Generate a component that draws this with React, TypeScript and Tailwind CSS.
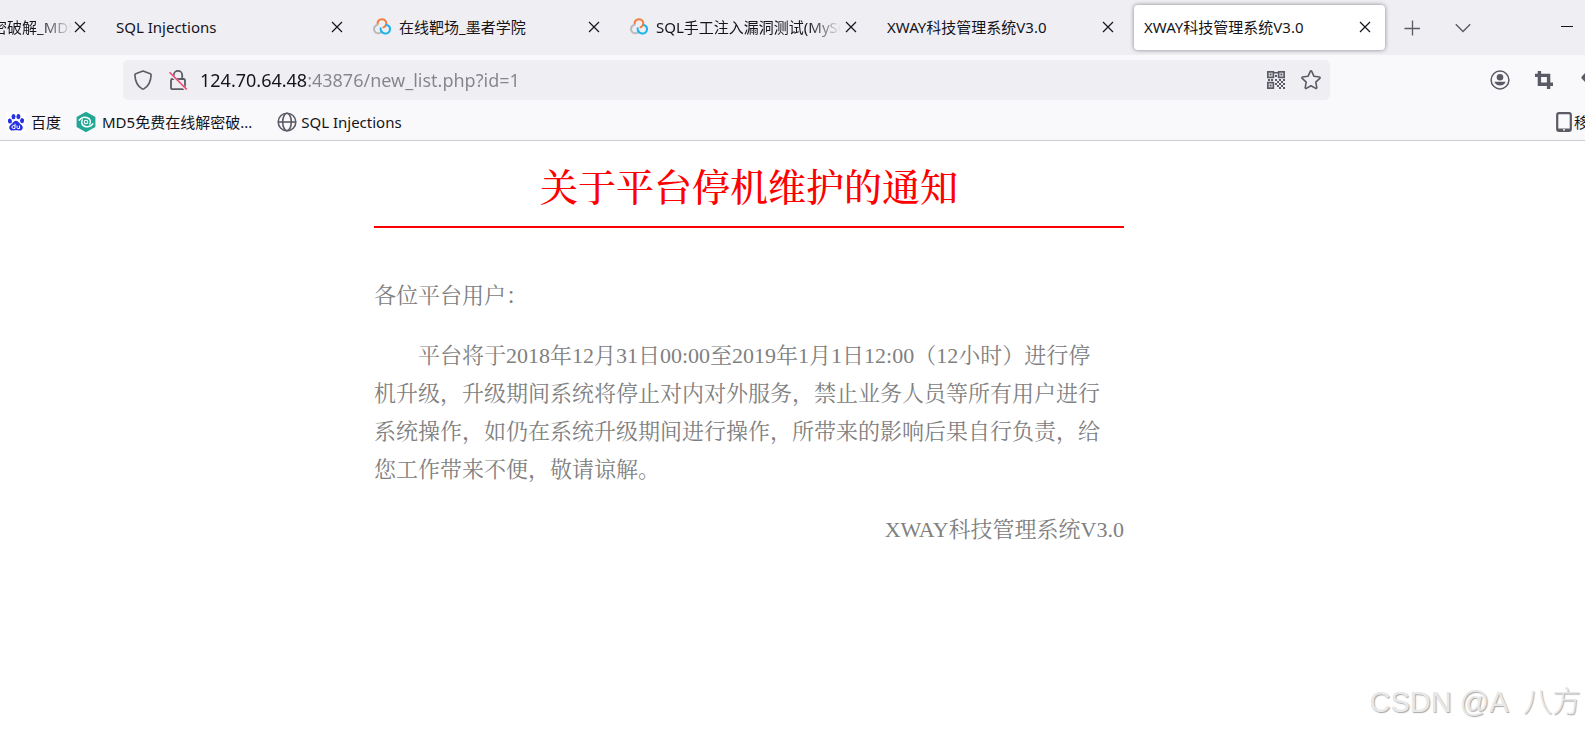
import React from "react";

function CloseIcon() {
  return (
    <svg width="12" height="12" viewBox="0 0 12 12" fill="none" stroke="#15141a" strokeWidth="1.2" aria-hidden="true">
      <path d="M1 1l10 10M11 1L1 11" />
    </svg>
  );
}

function CloverIcon() {
  return (
    <svg width="18" height="18" viewBox="0 0 18 18" fill="none" strokeWidth="2" strokeLinecap="round" className="shrink-0" aria-hidden="true">
      <path d="M4.6 6.2C4.2 3 6.400 1.300 9 1.300c3 0 4.900 2.400 4.200 4.900-.4 1.500-1.400 2.500-2.700 3.100" stroke="#f47b3a" />
      <path d="M4.300 6.900C1.800 7.700.8 9.800 1.100 11.800c.4 2.600 3 4.200 5.500 3.300.9-.3 1.500-.9 2-1.500" stroke="#b9babc" />
      <path d="M13.700 6.900c2.400.7 3.500 2.600 3.300 4.700-.3 2.700-2.700 4.300-5.200 3.800-2.600-.5-4.200-2.800-4.200-5.200" stroke="#1cb4ea" />
    </svg>
  );
}

type TabProps = { title: string; icon?: boolean; active?: boolean; fade?: boolean };

function Tab({ title, icon, active, fade }: TabProps) {
  return (
    <div className="flex w-[257px] shrink-0 px-[3px] py-[5px]">
      <div
        className={
          "flex h-[45px] min-w-0 flex-1 items-center rounded-[4px] pr-[14px] pb-[2px] pl-[10px] " +
          (active ? "bg-white shadow-[0_0_4px_rgba(0,0,0,0.45)]" : "")
        }
      >
        {icon && (
          <span className="mr-2 flex">
            <CloverIcon />
          </span>
        )}
        <button
          type="button"
          className={
            "min-w-0 flex-1 overflow-hidden text-left whitespace-nowrap " +
            (fade ? "[mask-image:linear-gradient(to_left,transparent,black_32px)]" : "")
          }
        >
          {title}
        </button>
        <button type="button" aria-label="关闭标签页" className="ml-1 flex shrink-0">
          <CloseIcon />
        </button>
      </div>
    </div>
  );
}

function TabBar() {
  return (
    <div className="flex h-[55px] overflow-hidden bg-[#efeef3]">
      <div className="flex w-[103px] shrink-0 items-center pr-[17px] pb-[2px]">
        <button
          type="button"
          className="flex min-w-0 flex-1 overflow-hidden whitespace-nowrap [mask-image:linear-gradient(to_left,transparent,black_32px)]"
        >
          <span className="-ml-2">密破解_MD5</span>
        </button>
        <button type="button" aria-label="关闭标签页" className="ml-[2px] flex">
          <CloseIcon />
        </button>
      </div>
      <Tab title="SQL Injections" />
      <Tab title="在线靶场_墨者学院" icon />
      <Tab title="SQL手工注入漏洞测试(MySQL" icon fade />
      <Tab title="XWAY科技管理系统V3.0" />
      <Tab title="XWAY科技管理系统V3.0" active />
      <button type="button" aria-label="新建标签页" className="ml-4 flex shrink-0 items-center">
        <svg width="16" height="16" viewBox="0 0 16 16" stroke="#5b5b66" strokeWidth="1.3" aria-hidden="true">
          <path d="M8.500.5v15M.5 8.500h15.500" />
        </svg>
      </button>
      <button type="button" aria-label="列出所有标签页" className="ml-[35px] flex shrink-0 items-center">
        <svg width="16" height="10" viewBox="0 0 16 10" fill="none" stroke="#5b5b66" strokeWidth="1.400" aria-hidden="true">
          <path d="M.8 1.200L8 8.400l7.200-7.200" />
        </svg>
      </button>
      <button type="button" aria-label="最小化" className="mr-3 ml-auto flex shrink-0 items-center">
        <svg width="12" height="4" viewBox="0 0 12 4" aria-hidden="true">
          <path d="M0 0h12v1H0z" fill="#15141a" />
        </svg>
      </button>
    </div>
  );
}

function QrIcon() {
  const checks = [
    [10, 10], [14, 10], [12, 12], [16, 12], [10, 14], [14, 14], [12, 16], [16, 16],
    [8, 8], [12, 8], [16, 8], [8, 12], [8, 4], [4, 8], [1, 8],
  ];
  return (
    <svg width="18" height="18" viewBox="0 0 18 18" fill="#5b5b66" aria-hidden="true">
      <g fill="none" stroke="#5b5b66" strokeWidth="1.700">
        <path d="M.85.85h5.500v5.500H.85zM11.650.85h5.500v5.500h-5.500zM.85 11.650h5.500v5.500H.85z" />
      </g>
      <path d="M2.600 2.600h2v2h-2zM13.400 2.600h2v2h-2zM2.600 13.400h2v2h-2zM7 1h4v1.500H7z" />
      {checks.map(([x, y]) => (
        <rect key={`${x}-${y}`} x={x} y={y} width="2" height="2" />
      ))}
    </svg>
  );
}

function Toolbar() {
  return (
    <div className="flex h-[50px] items-center overflow-hidden bg-[#f9f9fb] pl-[123px]">
      <form className="flex h-10 min-w-0 flex-1 items-center rounded-[5px] bg-[#efeef3] pr-[9px] pl-[11px]">
        <svg width="18" height="20" viewBox="0 0 18 20" fill="none" stroke="#5b5b66" strokeWidth="1.600" strokeLinejoin="round" className="shrink-0" aria-hidden="true">
          <path d="M9 1L1.700 3.700C1 4 .8 4.400.9 5.100c.3 6.300 2.300 10.600 6.900 13.500q1.200.8 2.400 0c4.600-2.900 6.600-7.200 6.900-13.500.1-.7-.1-1.100-.8-1.400z" />
        </svg>
        <svg width="20" height="22" viewBox="0 0 20 22" fill="none" className="ml-4 shrink-0" aria-hidden="true">
          <rect x="3" y="10" width="14" height="10.200" rx="1.500" stroke="#5b5b66" strokeWidth="1.800" />
          <path d="M5.800 10V6a4.200 4.200 0 0 1 8.400 0v4" stroke="#5b5b66" strokeWidth="1.800" />
          <path d="M.8 3.200l17.600 17.600" stroke="#efeef3" strokeWidth="3" />
          <path d="M1.500 3.200L18.800 20.500" stroke="#f0406c" strokeWidth="1.500" />
        </svg>
        <input
          type="text"
          aria-label="地址栏"
          defaultValue="124.70.64.48:43876/new_list.php?id=1"
          className="ml-3 min-w-0 flex-1 bg-[linear-gradient(to_right,#15141a_107px,#85848b_107px)] bg-clip-text text-[18px] leading-[30px] text-transparent outline-none"
        />
        <button type="button" aria-label="二维码" className="flex shrink-0">
          <QrIcon />
        </button>
        <button type="button" aria-label="收藏" className="ml-4 flex shrink-0">
          <svg width="20" height="20" viewBox="0 0 20 20" fill="none" stroke="#5b5b66" strokeWidth="1.600" strokeLinejoin="round" aria-hidden="true">
            <path d="M9.300 1.300q.7-1 1.400 0l2.300 5 5.400.7q1.200.4.400 1.300l-4 3.800 1 5.500q0 1.200-1.100.8L10 15.700l-4.700 2.700q-1.100.4-1.100-.8l1-5.500-4-3.800q-.8-.9.4-1.300l5.400-.7z" />
          </svg>
        </button>
      </form>
      <div className="flex w-[255px] shrink-0 items-center justify-end">
        <button type="button" aria-label="账户" className="flex shrink-0">
          <svg width="20" height="20" viewBox="0 0 20 20" aria-hidden="true">
            <circle cx="10" cy="10" r="8.900" fill="none" stroke="#5b5b66" strokeWidth="1.500" />
            <circle cx="10" cy="7.300" r="3.300" fill="#5b5b66" />
            <path d="M4.400 11.800h11.200c-.6 2.400-2.800 3.700-5.600 3.700s-5-1.300-5.600-3.700z" fill="#5b5b66" />
          </svg>
        </button>
        <button type="button" aria-label="截图" className="ml-[25px] flex shrink-0">
          <svg width="18" height="18" viewBox="0 0 18 18" fill="none" stroke="#5b5b66" strokeWidth="3.400" aria-hidden="true">
            <path d="M4.400 0v13.200H18M0 4.400h13.600V18" />
          </svg>
        </button>
        <button type="button" aria-label="扩展" className="ml-7 flex shrink-0">
          <svg width="4" height="20" viewBox="0 0 4 20" aria-hidden="true">
            <path d="M4 3L.6 6.800q-.6.700 0 1.400L4 12z" fill="#5b5b66" />
          </svg>
        </button>
      </div>
    </div>
  );
}

function Bookmarks() {
  return (
    <nav className="flex h-9 items-center overflow-hidden border-b border-[#cccccc] bg-[#f9f9fb] pb-[2px] pl-[6px] whitespace-nowrap">
      <a href="#baidu" className="flex items-center gap-[5px]">
        <svg width="20" height="20" viewBox="0 0 20 20" aria-hidden="true">
          <rect width="20" height="20" rx="2" fill="#fff" />
          <g fill="#2932e1">
            <ellipse cx="3.900" cy="9" rx="2" ry="2.600" transform="rotate(-12 3.900 9)" />
            <ellipse cx="7.500" cy="4.600" rx="2" ry="2.700" />
            <ellipse cx="12.400" cy="4.600" rx="2" ry="2.700" transform="rotate(8 12.400 4.600)" />
            <ellipse cx="16.100" cy="8.700" rx="2" ry="2.600" transform="rotate(10 16.100 8.700)" />
            <path d="M10 8.800c1.900 0 2.700 1.500 3.800 2.700 1.300 1.300 3.200 2.200 3 4.300-.2 2.200-1.900 2.900-3.600 2.800-1.300-.1-2-.3-3.200-.3s-1.900.2-3.200.3c-1.700.1-3.400-.6-3.600-2.800-.2-2.100 1.700-3 3-4.300C7.300 10.300 8.100 8.800 10 8.800z" />
          </g>
          <path d="M9 11.800v4.700H7.400a1.400 1.400 0 0 1 0-2.900H9M11 13.500v2q0 1 1 1h1.500v-3" stroke="#fff" strokeWidth="1" fill="none" />
        </svg>
        百度
      </a>
      <a href="#md5" className="ml-[15px] flex items-center gap-[6px]">
        <svg width="20" height="20" viewBox="0 0 20 20" aria-hidden="true">
          <path d="M10 .8l8.600 4.600v9.200L10 19.200 1.400 14.600V5.400z" fill="#22a795" stroke="#22a795" strokeWidth="1.600" strokeLinejoin="round" />
          <g fill="none" stroke="#fff" strokeWidth="1.500" strokeLinecap="round">
            <path d="M3.200 8.200C5 5.400 9 4.400 12 6c2.400 1.200 2.800 4 1.800 6" />
            <path d="M16.800 11.800C15 14.600 11 15.600 8 14c-2.400-1.200-2.800-4-1.800-6" />
          </g>
          <circle cx="10" cy="10" r="1.700" fill="none" stroke="#fff" strokeWidth="1.100" />
        </svg>
        MD5免费在线解密破...
      </a>
      <a href="#sql" className="ml-[25px] flex items-center gap-1">
        <svg width="20" height="20" viewBox="0 0 20 20" fill="none" stroke="#5b5b66" strokeWidth="1.600" aria-hidden="true">
          <circle cx="10" cy="10" r="8.800" />
          <ellipse cx="10" cy="10" rx="4.300" ry="8.800" />
          <path d="M1.200 10h17.600" />
        </svg>
        SQL Injections
      </a>
      <a href="#mobile" className="ml-auto flex w-[29px] shrink-0 items-center gap-[2px] overflow-hidden">
        <svg width="16" height="20" viewBox="0 0 16 20" className="shrink-0" aria-hidden="true">
          <rect x="1.200" y="1.200" width="13.600" height="17.600" rx="1.800" fill="none" stroke="#5b5b66" strokeWidth="2.200" />
          <path d="M1 16.500h14v2.500H1z" fill="#5b5b66" />
          <path d="M7 17.200h2v1.200H7z" fill="#fff" />
        </svg>
        移
      </a>
    </nav>
  );
}

export default function App() {
  return (
    <div className="relative flex min-h-screen flex-col overflow-hidden bg-white font-['Noto_Sans','Noto_Sans_CJK_SC',sans-serif] text-[15px] leading-[22px] text-[#15141a]">
      <header>
        <TabBar />
        <Toolbar />
        <Bookmarks />
      </header>
      <main className="flex-1 pr-[87px] font-['Liberation_Serif','Noto_Serif_CJK_SC','Noto_Sans_CJK_SC',serif]">
        <article className="mx-auto w-full max-w-[750px] text-[22px] leading-[38px] font-normal text-[#808080]">
          <h1 className="border-b-2 border-[#ff0000] pt-5 pb-[11px] text-center text-[38px] leading-[54px] font-medium text-[#ff0000]">
            关于平台停机维护的通知
          </h1>
          <p className="mt-[49px]">各位平台用户：</p>
          <p className="mt-[22px] pr-4 indent-[44px]">
            平台将于2018年12月31日00:00至2019年1月1日12:00（12小时）进行停机升级，升级期间系统将停止对内对外服务，禁止业务人员等所有用户进行系统操作，如仍在系统升级期间进行操作，所带来的影响后果自行负责，给您工作带来不便，敬请谅解。
          </p>
          <p className="mt-[22px] text-right">XWAY科技管理系统V3.0</p>
        </article>
      </main>
      <div className="absolute right-1 bottom-2 font-['Liberation_Sans','Noto_Sans_CJK_SC',sans-serif] text-[29px] leading-[40px] font-light whitespace-pre text-[#e8e8e8] [text-shadow:1px_1px_1px_#a8a8a8]">
        CSDN @A  八方
      </div>
    </div>
  );
}
